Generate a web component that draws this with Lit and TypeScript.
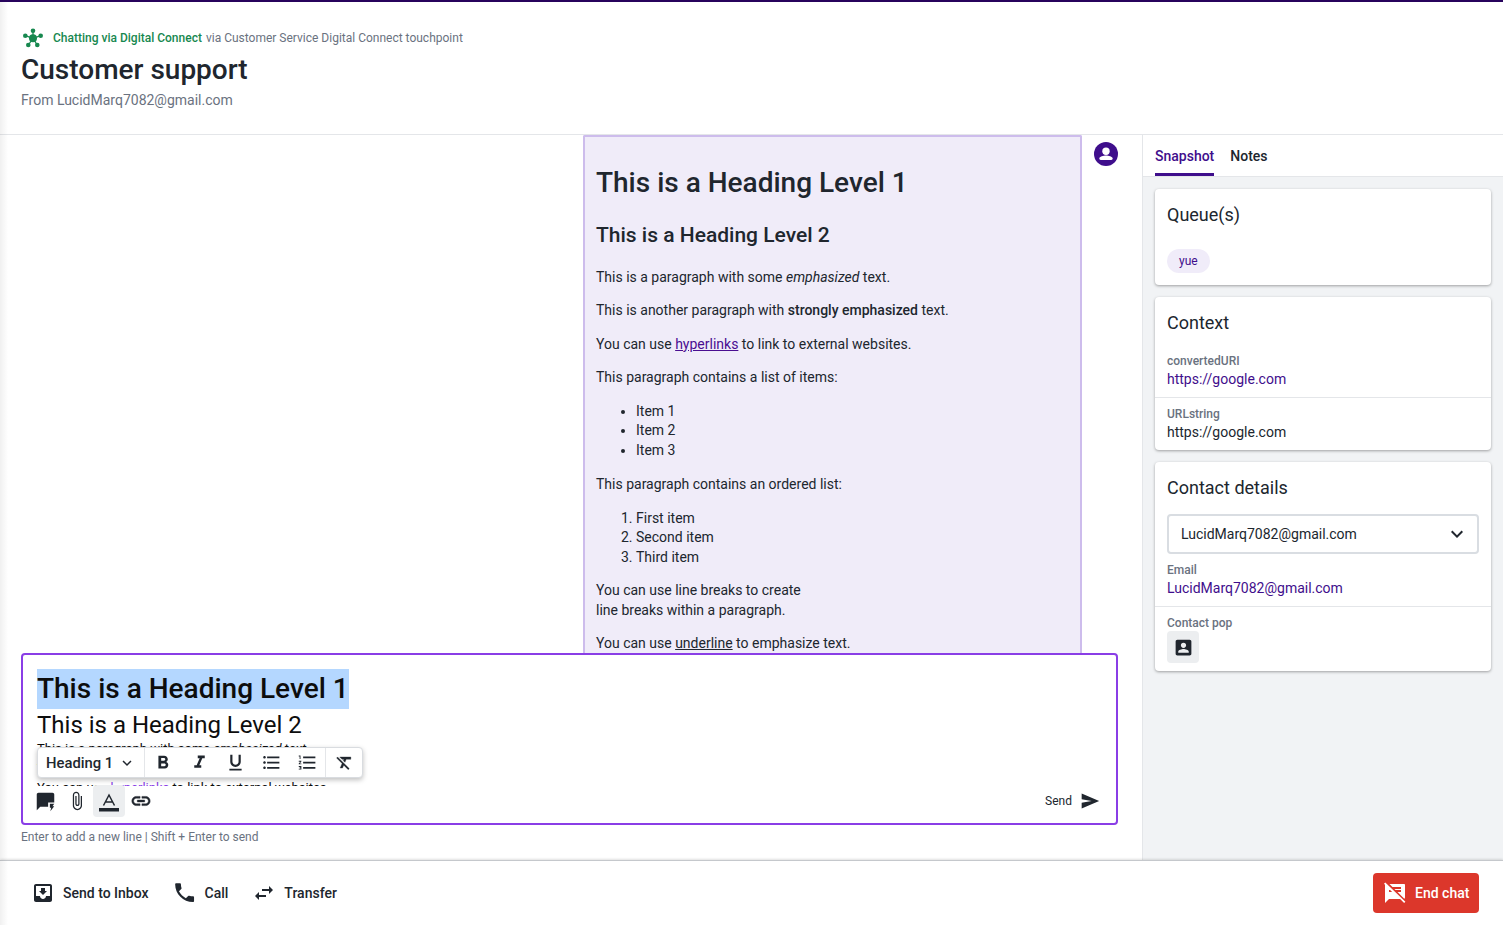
import { LitElement, html, css, svg } from "lit";
import { customElement } from "lit/decorators.js";

const ic = (d: any, size = 24, cls = "") => html`<svg class=${cls} width=${size} height=${size} viewBox="0 0 24 24" fill="currentColor">${d}</svg>`;

const icons = {
  chevron: svg`<path d="M7.41 8.59 12 13.17l4.59-4.58L18 10l-6 6-6-6z"/>`,
  bold: svg`<path d="M15.6 10.79c.97-.67 1.65-1.77 1.65-2.79 0-2.26-1.75-4-4-4H7v14h7.04c2.09 0 3.71-1.7 3.71-3.79 0-1.52-.86-2.82-2.15-3.42zM10 6.5h3c.83 0 1.5.67 1.5 1.5s-.67 1.5-1.5 1.5h-3v-3zm3.5 9H10v-3h3.5c.83 0 1.5.67 1.5 1.5s-.67 1.5-1.5 1.5z"/>`,
  italic: svg`<path d="M10 4v3h2.21l-3.42 8H6v3h8v-3h-2.21l3.42-8H18V4z"/>`,
  underline: svg`<path d="M12 17c3.31 0 6-2.69 6-6V3h-2.5v8c0 1.93-1.57 3.5-3.5 3.5S8.5 12.93 8.5 11V3H6v8c0 3.31 2.69 6 6 6zm-7 2v2h14v-2H5z"/>`,
  bullets: svg`<path d="M4 10.5c-.83 0-1.5.67-1.5 1.5s.67 1.5 1.5 1.5 1.5-.67 1.5-1.5-.67-1.5-1.5-1.5zm0-6c-.83 0-1.5.67-1.5 1.5S3.17 7.5 4 7.5 5.5 6.83 5.5 6 4.83 4.5 4 4.5zm0 12c-.83 0-1.5.68-1.5 1.5s.68 1.5 1.5 1.5 1.5-.68 1.5-1.5-.67-1.5-1.5-1.5zM7 19h14v-2H7v2zm0-6h14v-2H7v2zm0-8v2h14V5H7z"/>`,
  numbers: svg`<path d="M2 17h2v.5H3v1h1v.5H2v1h3v-4H2v1zm1-9h1V4H2v1h1v3zm-1 3h1.8L2 13.1v.9h3v-1H3.2L5 10.9V10H2v1zm5-6v2h14V5H7zm0 14h14v-2H7v2zm0-6h14v-2H7v2z"/>`,
  clear: svg`<path stroke="currentColor" stroke-width=".4" d="M3.27 5 2 6.27l6.97 6.97L6.5 19h3l1.57-3.66L16.73 21 18 19.73 3.55 5.27 3.27 5zM6 5v.18L8.82 8h2.4l-.72 1.68 2.1 2.1L14.21 8H20V5H6z"/>`,
  attach: svg`<path d="M16.5 6v11.5c0 2.21-1.79 4-4 4s-4-1.79-4-4V5c0-1.38 1.12-2.5 2.5-2.5s2.5 1.12 2.5 2.5v10.5c0 .55-.45 1-1 1s-1-.45-1-1V6H10v9.5c0 1.38 1.12 2.5 2.5 2.5s2.5-1.12 2.5-2.5V5c0-2.21-1.79-4-4-4S7 2.79 7 5v12.5c0 3.04 2.46 5.5 5.5 5.5s5.5-2.46 5.5-5.5V6h-1.5z"/>`,
  format: svg`<path d="M6.5 16.5 12 6l5.5 10.5M8.4 13h7.2" fill="none" stroke="currentColor" stroke-width="1.5"/><rect x="2" y="19" width="20" height="3.5"/>`,
  link: svg`<path stroke="currentColor" stroke-width=".5" d="M3.9 12c0-1.71 1.39-3.1 3.1-3.1h4V7H7c-2.76 0-5 2.24-5 5s2.24 5 5 5h4v-1.9H7c-1.71 0-3.1-1.39-3.1-3.1zM8 13h8v-2H8v2zm9-6h-4v1.9h4c1.71 0 3.1 1.39 3.1 3.1s-1.39 3.1-3.1 3.1h-4V17h4c2.76 0 5-2.24 5-5s-2.24-5-5-5z"/>`,
  quick: svg`<path d="M22 4c0-1.1-.9-2-2-2H4c-1.1 0-2 .9-2 2v18l4-4h9v-5h7V4z"/><path d="M17 14.5h5l-2 3h2l-4.5 5.5 1-4H17z"/>`,
  send: svg`<path d="M2.01 21 23 12 2.01 3 2 10l12 2-12 2z"/>`,
  inbox: svg`<path d="M19 3H5c-1.1 0-2 .9-2 2v14c0 1.1.9 2 2 2h14c1.1 0 2-.9 2-2V5c0-1.1-.9-2-2-2zm0 12h-4c0 1.66-1.35 3-3 3s-3-1.34-3-3H5V5h14v10zm-3-5h-2V7h-4v3H8l4 4 4-4z"/>`,
  phone: svg`<path d="M6.62 10.79c1.44 2.83 3.76 5.14 6.59 6.59l2.2-2.2c.27-.27.67-.36 1.02-.24 1.12.37 2.33.57 3.57.57.55 0 1 .45 1 1V20c0 .55-.45 1-1 1-9.39 0-17-7.61-17-17 0-.55.45-1 1-1h3.5c.55 0 1 .45 1 1 0 1.25.2 2.45.57 3.57.11.35.03.74-.25 1.02l-2.2 2.2z" transform="translate(-1 -1) scale(1.05)"/>`,
  transfer: svg`<path d="M6.99 11 3 15l3.99 4v-3H14v-2H6.99v-3zM21 9l-3.99-4v3H10v2h7.01v3L21 9z"/>`,
  endchat: svg`<path d="M21 3H6.5l3 3H18v2h-6.5l1 1H18v2h-3.5l6.8 6.8c.4-.3.7-.8.7-1.3V4c0-.6-.4-1-1-1z"/><path d="M2.27 1.6 1 2.87l1 1V22l4-4h11.13l4 4 1.27-1.27L2.27 1.6zM6 9h1.1l2 2H6V9zm0-3h.0L6 6.9V6z"/>`,
  contact: svg`<path d="M19 3H5c-1.1 0-2 .9-2 2v14c0 1.1.9 2 2 2h14c1.1 0 2-.9 2-2V5c0-1.1-.9-2-2-2zm-7 3.5c1.93 0 3 1.4 3 3s-1.07 3-3 3-3-1.4-3-3 1.07-3 3-3zM18 18H6v-1.2c0-2 4-3.1 6-3.1s6 1.1 6 3.1V18z"/>`,
};

const avatar = svg`<circle cx="12" cy="12" r="12"/><circle cx="12" cy="9.2" r="3.7" fill="#fff"/><path fill="#fff" d="M5.3 16.6c0-2.1 4.4-3 6.7-3s6.7.9 6.7 3c0 .9-.6 1.4-1.4 1.4H6.7c-.8 0-1.4-.5-1.4-1.4z"/>`;

@customElement("app-root")
export class AppRoot extends LitElement {
  static styles = css`
    :host { position: relative; display: flex; flex-direction: column; width: 1503px; height: 925px; overflow: hidden; background: #fff; font-family: Roboto, "Liberation Sans", sans-serif; font-size: 14px; color: #20262e; }
    svg { display: block; flex: none; }
    .top { flex: none; height: 135px; box-sizing: border-box; border-top: 2px solid #27035c; border-bottom: 1px solid #e4e6e9; padding: 26px 21px 0; }
    .via { display: flex; align-items: center; height: 20px; font-size: 12px; color: #6a7280; }
    .via svg { margin-right: 8px; }
    .via b { font-weight: 500; color: #17884f; margin-right: 4px; }
    h1.title { margin: 4px 0 0; font-size: 28px; line-height: 36px; font-weight: 500; color: #20262e; }
    .from { margin-top: 2px; color: #6a7280; line-height: 20px; }
    .main { flex: 1; min-height: 0; display: flex; }
    .left { flex: none; width: 1142px; display: flex; flex-direction: column; }
    .transcript { flex: none; height: 518px; overflow: hidden; display: flex; justify-content: flex-end; padding-right: 24px; gap: 12px; }
    .bubble { width: 499px; box-sizing: border-box; flex: none; background: #f0ecf9; border: 2px solid #cdbcec; border-bottom: none; border-radius: 2px 2px 0 0; padding: 13px 11px 0; height: 518px; overflow: hidden; line-height: 20px; }
    .bubble h1 { font-size: 28px; line-height: 36px; font-weight: 500; margin: 15px 0 0; }
    .bubble h2 { font-size: 21px; line-height: 28px; font-weight: 500; margin: 20px 0 0; }
    .bubble p { margin: 13.4px 0 0; }
    .bubble h2 + p { margin-top: 18px; }
    .bubble ul, .bubble ol { padding-left: 40px; line-height: 19.6px; }
    .bubble ul { margin: 14.6px 0 0; }
    .bubble ol { margin: 15px 0 0; }
    .bubble ul + p { margin-top: 13.2px; }
    .bubble ol + p { margin-top: 12px; }
    .bubble p:last-child { margin-top: 13px; }
    .bubble a { color: #4a0e91; text-decoration: underline; }
    .avatar { color: #3f0e8c; margin-top: 7px; }
    .compose { flex: none; margin: 0 24px 0 21px; height: 172px; box-sizing: border-box; border: 2px solid #8a3ee6; border-radius: 4px; background: #fff; position: relative; display: flex; flex-direction: column; }
    .editor { flex: none; height: 131px; overflow: hidden; padding: 14px 14px 0; color: #0d0d0d; box-sizing: border-box; }
    .editor .h1 { font-size: 28px; line-height: 40px; font-weight: 500; }
    .editor .h1 span { background: #b4d7ff; display: inline-block; }
    .editor .h2 { font-size: 24px; line-height: 32px; font-weight: 400; margin-bottom: -2px; }
    .editor .p { font-size: 13px; line-height: 19.5px; white-space: nowrap; }
    .editor a { color: #8a3ee6; text-decoration: underline; }
    .floatbar { position: absolute; left: 14px; top: 92px; height: 31px; box-sizing: border-box; display: flex; align-items: center; background: #fff; border: 1px solid #d9dce0; border-radius: 4px; box-shadow: 0 2px 5px rgba(0,0,0,.25); }
    .floatbar .sel { display: flex; align-items: center; gap: 5px; font-size: 14.8px; font-weight: 500; color: #20262e; padding-left: 8px; width: 107px; box-sizing: border-box; height: 100%; border-right: 1px solid #e4e6e9; }
    .floatbar .btn { width: 36px; height: 29px; display: flex; align-items: center; justify-content: center; color: #20262e; }
    .floatbar .last { border-left: 1px solid #e4e6e9; }
    .tools { flex: 1; display: flex; align-items: flex-start; padding: 0 14px 0 6px; color: #20262e; margin-top: -1px; }
    .tools .t { width: 32px; height: 32px; display: flex; align-items: center; justify-content: center; border-radius: 4px; }
    .tools .on { background: #eceef0; }
    .send { margin-left: auto; height: 32px; display: flex; align-items: center; gap: 8px; font-size: 12px; margin-right: 2px; }
    .hint { margin: 4px 0 0 21px; font-size: 12px; line-height: 16px; color: #6a7280; }
    .right { flex: 1; background: #f1f3f5; border-left: 1px solid #e4e6e9; min-width: 0; }
    .tabs { height: 42px; box-sizing: border-box; background: #fff; border-bottom: 1px solid #e4e6e9; display: flex; padding-left: 12px; gap: 16px; font-weight: 500; }
    .tab { height: 41px; box-sizing: border-box; padding-top: 11px; line-height: 20px; }
    .tab.active { color: #3f0e8c; border-bottom: 3px solid #3f0e8c; }
    .cards { padding: 12px 12px 0; display: flex; flex-direction: column; gap: 12px; }
    .card { background: #fff; border-radius: 4px; box-shadow: 0 1px 3px rgba(0,0,0,.35); }
    .card h3 { margin: 0; font-size: 18px; line-height: 24px; font-weight: 400; padding: 14px 12px 0; }
    .chip { display: inline-block; background: #f0ecf9; color: #3f0e8c; font-size: 12px; line-height: 24px; padding: 0 12px; border-radius: 12px; }
    .queue { height: 96px; box-sizing: border-box; }
    .queue .wrap { padding: 22px 12px 0; line-height: 24px; display: flex; }
    .field { padding: 8px 12px; }
    .field.first { padding-top: 18px; }
    .field.mail { padding-top: 8px; }
    .field.url { padding-top: 7.5px; padding-bottom: 8.5px; }
    .field .k { font-size: 12px; line-height: 16px; color: #6a7280; font-weight: 500; }
    .field .v { line-height: 20px; }
    .lnk { color: #3f0e8c; }
    .sep { border-top: 1px solid #e4e6e9; }
    .select { margin: 14px 12px 0; height: 40px; box-sizing: border-box; border: 2px solid #d9dde2; border-radius: 4px; display: flex; align-items: center; justify-content: space-between; padding: 0 8px 0 12px; }
    .pop { width: 32px; height: 32px; border-radius: 4px; background: #eceef0; display: flex; align-items: center; justify-content: center; }
    .foot { flex: none; height: 65px; box-sizing: border-box; border-top: 1px solid #c5c8cc; box-shadow: 0 -1px 2px rgba(0,0,0,.12); background: #fff; display: flex; align-items: center; padding: 0 24px 0 31px; font-weight: 500; position: relative; }
    .act { display: flex; align-items: center; gap: 8px; margin-right: 24px; }
    .end { margin-left: auto; width: 106px; height: 40px; box-sizing: border-box; background: #dc372b; color: #fff; border-radius: 4px; display: flex; align-items: center; gap: 8px; padding-left: 10px; font-weight: 500; }
    .logo { color: #17884f; }
    .shade { position: absolute; left: 0; top: 2px; bottom: 0; width: 8px; pointer-events: none; background: linear-gradient(to right, rgba(0,0,0,.06), rgba(0,0,0,0)); }
  `;

  render() {
    return html`
      <div class="top">
        <div class="via">
          <svg class="logo" width="24" height="24" viewBox="0 0 24 24" fill="currentColor"><g stroke="currentColor" stroke-width="1.3"><line x1="12" y1="12.3" x2="12" y2="4.7"/><line x1="12" y1="12.3" x2="19.7" y2="9.7"/><line x1="12" y1="12.3" x2="16.3" y2="19"/><line x1="12" y1="12.3" x2="7.3" y2="19"/><line x1="12" y1="12.3" x2="4.3" y2="9.7"/></g><circle cx="12" cy="12.3" r="4"/><circle cx="12" cy="4.7" r="2.3"/><circle cx="19.7" cy="9.7" r="2.3"/><circle cx="16.3" cy="19" r="2.3"/><circle cx="7.3" cy="19" r="2.3"/><circle cx="4.3" cy="9.7" r="2.3"/></svg>
          <b>Chatting via Digital Connect</b> via Customer Service Digital Connect touchpoint
        </div>
        <h1 class="title">Customer support</h1>
        <div class="from">From LucidMarq7082@gmail.com</div>
      </div>
      <div class="main">
        <div class="left">
          <div class="transcript">
            <div class="bubble">
              <h1>This is a Heading Level 1</h1>
              <h2>This is a Heading Level 2</h2>
              <p>This is a paragraph with some <em>emphasized</em> text.</p>
              <p>This is another paragraph with <strong style="font-weight:500">strongly emphasized</strong> text.</p>
              <p>You can use <a>hyperlinks</a> to link to external websites.</p>
              <p>This paragraph contains a list of items:</p>
              <ul><li>Item 1</li><li>Item 2</li><li>Item 3</li></ul>
              <p>This paragraph contains an ordered list:</p>
              <ol><li>First item</li><li>Second item</li><li>Third item</li></ol>
              <p>You can use line breaks to create<br />line breaks within a paragraph.</p>
              <p>You can use <u>underline</u> to emphasize text.</p>
            </div>
            <div class="avatar">${ic(avatar, 24)}</div>
          </div>
          <div class="compose">
            <div class="editor">
              <div class="h1"><span>This is a Heading Level 1</span></div>
              <div class="h2">This is a Heading Level 2</div>
              <div class="p">This is a paragraph with some <em>emphasized</em> text.</div>
              <div class="p">This is another paragraph with strongly emphasized text.</div>
              <div class="p">You can use <a>hyperlinks</a> to link to external websites.</div>
            </div>
            <div class="floatbar">
              <div class="sel">Heading 1 ${ic(icons.chevron, 18)}</div>
              <div class="btn">${ic(icons.bold, 22)}</div>
              <div class="btn">${ic(icons.italic, 21)}</div>
              <div class="btn">${ic(icons.underline, 21)}</div>
              <div class="btn">${ic(icons.bullets, 21)}</div>
              <div class="btn">${ic(icons.numbers, 21)}</div>
              <div class="btn last">${ic(icons.clear, 19)}</div>
            </div>
            <div class="tools">
              <div class="t">${ic(icons.quick, 21)}</div>
              <div class="t">${ic(icons.attach, 20)}</div>
              <div class="t on">${ic(icons.format, 24)}</div>
              <div class="t">${ic(icons.link, 22)}</div>
              <div class="send">Send ${ic(icons.send, 20)}</div>
            </div>
          </div>
          <div class="hint">Enter to add a new line | Shift + Enter to send</div>
        </div>
        <div class="right">
          <div class="tabs">
            <div class="tab active">Snapshot</div>
            <div class="tab">Notes</div>
          </div>
          <div class="cards">
            <div class="card queue">
              <h3>Queue(s)</h3>
              <div class="wrap"><span class="chip">yue</span></div>
            </div>
            <div class="card">
              <h3>Context</h3>
              <div class="field first"><div class="k">convertedURI</div><div class="v lnk">https://google.com</div></div>
              <div class="field sep url"><div class="k">URLstring</div><div class="v">https://google.com</div></div>
            </div>
            <div class="card">
              <h3>Contact details</h3>
              <div class="select"><span>LucidMarq7082@gmail.com</span>${ic(icons.chevron, 24)}</div>
              <div class="field mail"><div class="k">Email</div><div class="v lnk">LucidMarq7082@gmail.com</div></div>
              <div class="field sep"><div class="k">Contact pop</div><div class="pop">${ic(icons.contact, 21)}</div></div>
            </div>
          </div>
        </div>
      </div>
      <div class="foot">
        <div class="act">${ic(icons.inbox, 24)}Send to Inbox</div>
        <div class="act">${ic(icons.phone, 24)}Call</div>
        <div class="act">${ic(icons.transfer, 24)}Transfer</div>
        <div class="end">${ic(icons.endchat, 24)}End chat</div>
      </div>
      <div class="shade"></div>
    `;
  }
}
